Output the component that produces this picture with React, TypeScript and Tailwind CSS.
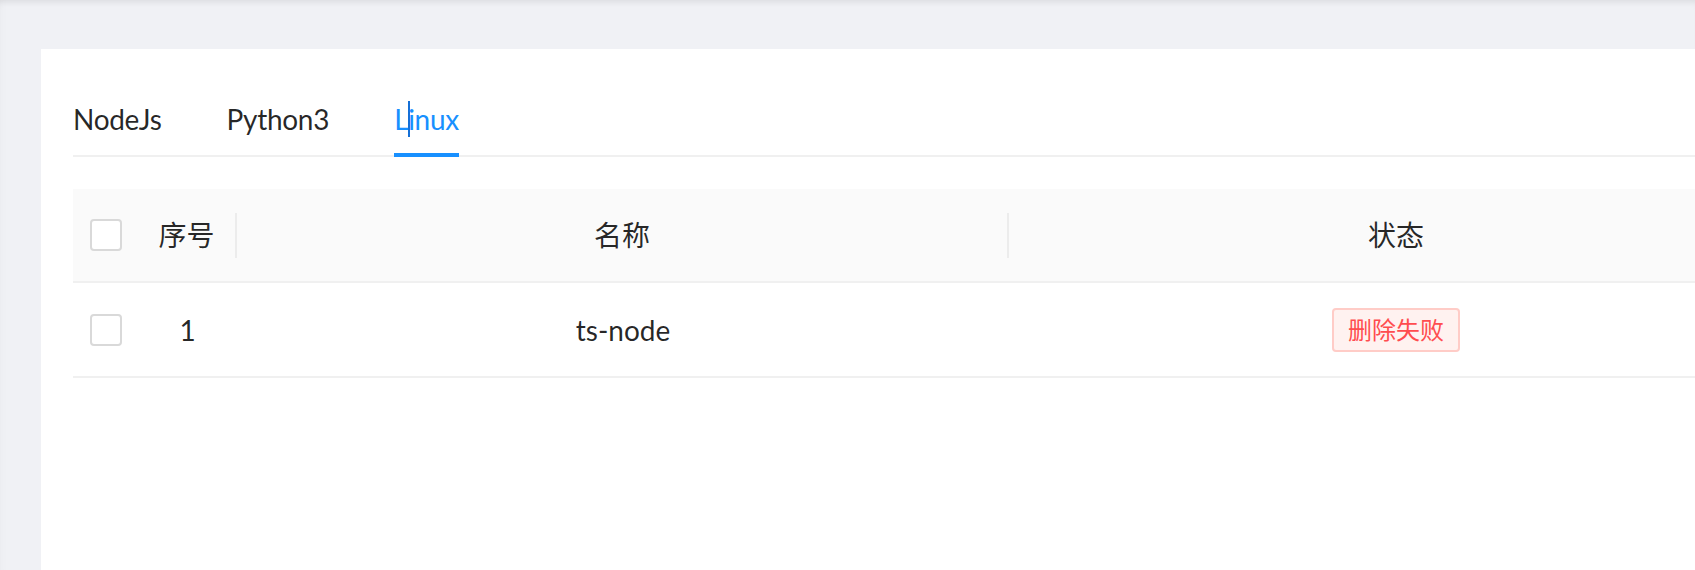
import { useState } from 'react';

type Row = { key: number; name: string; status: string };

const TABS = ['NodeJs', 'Python3', 'Linux'];

const ROWS: Row[] = [{ key: 1, name: 'ts-node', status: '删除失败' }];

// selection | index | name | status
const COLS = 'grid grid-cols-[65px_99px_772px_774px]';

function Checkbox() {
  return <span className="block w-[32px] h-[32px] rounded-[4px] border-2 border-[#d9d9d9] bg-white" />;
}

function HeadCell({ label, divider }: { label: string; divider?: boolean }) {
  return (
    <div className="flex items-center">
      <div className="flex-1 text-center">{label}</div>
      {divider && <span className="w-[2px] h-[45px] bg-[#ececec]" />}
    </div>
  );
}

function TabLabel({ label, active }: { label: string; active: boolean }) {
  if (!active) return <>{label}</>;
  // text caret sits right after the first letter
  return (
    <>
      {label[0]}
      <span className="inline-block w-[2px] h-[36px] -mr-[2px] align-[-7px] bg-[#1570d6]" />
      {label.slice(1)}
    </>
  );
}

export default function App() {
  const [active, setActive] = useState('Linux');

  return (
    <div className="h-[570px] w-full overflow-hidden flex bg-[#f0f1f5] pl-[41px] pt-[49px] shadow-[inset_0_6px_6px_-4px_rgba(0,0,0,0.09),inset_8px_0_8px_-6px_rgba(0,0,0,0.02)] font-['Lato','Noto_Sans_CJK_SC',sans-serif] text-black/85">
      <div className="w-[1773px] shrink-0 bg-white pl-[32px] pr-[32px] pt-[24px]">
        {/* tabs */}
        <div className="flex gap-[65px] border-b-2 border-[#f0f0f0] mb-[32px]">
          {TABS.map((t) => {
            const isActive = t === active;
            return (
              <button
                key={t}
                onClick={() => setActive(t)}
                className={`-mb-[2px] pt-[24px] pb-[12px] border-b-4 text-[28px] leading-[44px] tracking-[-0.3px] whitespace-nowrap ${
                  isActive ? 'border-[#1890ff] text-[#1890ff]' : 'border-transparent text-black/85'
                }`}
              >
                <TabLabel label={t} active={isActive} />
              </button>
            );
          })}
        </div>

        {/* table */}
        <div className="w-[1709px] text-[28px]">
          <div className={`${COLS} h-[94px] bg-[#fafafa] border-b-2 border-[#f0f0f0]`}>
            <div className="flex items-center justify-center">
              <Checkbox />
            </div>
            <HeadCell label="序号" divider />
            <HeadCell label="名称" divider />
            <HeadCell label="状态" />
          </div>

          {ROWS.map((r) => (
            <div key={r.key} className={`${COLS} h-[95px] border-b-2 border-[#f0f0f0]`}>
              <div className="flex items-center justify-center">
                <Checkbox />
              </div>
              <div className="flex items-center justify-center">{r.key}</div>
              <div className="flex items-center justify-center">{r.name}</div>
              <div className="flex items-center justify-center">
                <span className="px-[14px] leading-[40px] text-[24px] rounded-[4px] border-2 border-[#ffccc7] bg-[#fff2f0] text-[#ff4d4f]">
                  {r.status}
                </span>
              </div>
            </div>
          ))}
        </div>
      </div>
    </div>
  );
}
